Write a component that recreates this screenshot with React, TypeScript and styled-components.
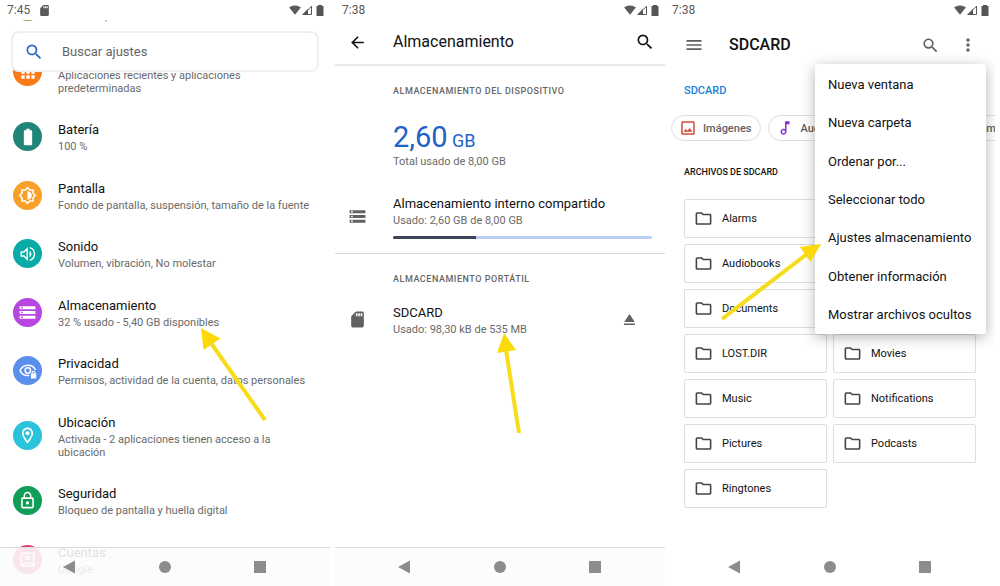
import React from "react";
import styled, { createGlobalStyle } from "styled-components";
import {
  MdApps,
  MdArrowBack,
  MdBatteryFull,
  MdDevicesOther,
  MdEject,
  MdLockOutline,
  MdMenu,
  MdMoreVert,
  MdOutlineAccountBox,
  MdOutlineAudiotrack,
  MdOutlineBrightness6,
  MdOutlineDescription,
  MdOutlineFolder,
  MdOutlineImage,
  MdOutlineLocationOn,
  MdOutlineMovie,
  MdOutlineVolumeUp,
  MdSdCard,
  MdSearch,
  MdSignalWifi4Bar,
  MdStorage,
} from "react-icons/md";

const GlobalStyle = createGlobalStyle`
  * { box-sizing: border-box; }
  body {
    margin: 0;
    background: #fff;
    color: #111;
    font-family: Roboto, "Liberation Sans", sans-serif;
  }
  button, input { font: inherit; color: inherit; }
  button { padding: 0; border: 0; background: none; cursor: pointer; }
  h1, h2, p, ul { margin: 0; padding: 0; }
  ul { list-style: none; }
  svg { display: block; flex: none; }
`;

const Page = styled.div`
  display: flex;
  min-height: 100vh;
  padding-right: 5px;
`;

const Screen = styled.section<{ $gapBefore?: boolean }>`
  position: relative;
  display: flex;
  flex-direction: column;
  flex: 1 1 0;
  min-width: 0;
  margin-left: ${(p) => (p.$gapBefore ? "5px" : "0")};
  overflow: hidden;
  background: #fff;
`;

/* Status bar */

const StatusRow = styled.div`
  position: relative;
  z-index: 2;
  display: flex;
  align-items: center;
  height: 20px;
  padding: 0 5px 0 7px;
  background: #fff;
  color: #5a5a5a;
  font-size: 12px;
  line-height: 20px;
`;

const StatusSide = styled.div<{ $end?: boolean }>`
  display: flex;
  align-items: center;
  gap: ${(p) => (p.$end ? "1px" : "8px")};
  margin-left: ${(p) => (p.$end ? "auto" : "0")};
`;

function SignalIcon() {
  return (
    <svg width="10" height="10" viewBox="0 0 10 10" aria-hidden="true">
      <path d="M0 10 L6 4 V10Z" fill="#555" />
      <path d="M1.2 9.5 L9.5 1.2 V9.5Z" fill="none" stroke="#555" />
    </svg>
  );
}

function BatteryGlyph() {
  return (
    <svg width="12" height="12" viewBox="0 0 12 12" aria-hidden="true">
      <path d="M5 1h4v1h1.5v10h-7V2H5z" fill="#555" />
    </svg>
  );
}

function StatusBar({ time, card }: { time: string; card?: boolean }) {
  return (
    <StatusRow>
      <StatusSide>
        <span>{time}</span>
        {card && <MdSdCard size={13} />}
      </StatusSide>
      <StatusSide $end>
        <MdSignalWifi4Bar size={12} />
        <SignalIcon />
        <BatteryGlyph />
      </StatusSide>
    </StatusRow>
  );
}

/* Navigation bar */

const NavRow = styled.nav<{ $variant: "overlay" | "tinted" | "plain" }>`
  display: flex;
  justify-content: space-between;
  align-items: center;
  height: 39px;
  margin-top: auto;
  padding: 0 64px 0 63px;
  border-top: 1px solid ${(p) => (p.$variant === "plain" ? "transparent" : "#dcdcdc")};
  background: ${(p) =>
    p.$variant === "overlay"
      ? "rgba(252, 252, 252, 0.88)"
      : p.$variant === "tinted"
      ? "#fcfcfc"
      : "#fff"};
  ${(p) =>
    p.$variant === "overlay" &&
    "position: absolute; left: 0; right: 0; bottom: 0; z-index: 2;"}
`;

const NavButton = styled.button`
  color: #8c8c8c;
`;

function NavBar({ variant }: { variant: "overlay" | "tinted" | "plain" }) {
  return (
    <NavRow $variant={variant} aria-label="Navegación">
      <NavButton aria-label="Atrás">
        <svg width="12" height="14" viewBox="0 0 12 14">
          <path d="M12 .5V13.5L0 7z" fill="currentColor" />
        </svg>
      </NavButton>
      <NavButton aria-label="Inicio">
        <svg width="12" height="12" viewBox="0 0 12 12">
          <circle cx="6" cy="6" r="6" fill="currentColor" />
        </svg>
      </NavButton>
      <NavButton aria-label="Recientes">
        <svg width="12" height="12" viewBox="0 0 12 12">
          <path d="M0 0h12v12H0z" fill="currentColor" />
        </svg>
      </NavButton>
    </NavRow>
  );
}

/* Shared text */

const ItemTitle = styled.p`
  font-size: 13px;
  line-height: 20px;
`;

const ItemDetail = styled.p`
  color: #6a6a6a;
  font-size: 11px;
  line-height: 13px;
`;

const Arrow = styled.svg`
  position: absolute;
  z-index: 4;
  pointer-events: none;
`;

/* Settings screen */

const SearchBox = styled.label`
  position: absolute;
  top: 31px;
  left: 11px;
  right: 11px;
  z-index: 2;
  display: flex;
  align-items: center;
  gap: 18px;
  height: 41px;
  padding: 0 11px;
  border: 2px solid #efefef;
  border-radius: 8px;
  background: #fff;
  color: #2663c4;
`;

const SearchInput = styled.input`
  flex: 1;
  min-width: 0;
  border: 0;
  padding: 0;
  outline: 0;
  background: transparent;
  font-size: 13px;
  &::placeholder {
    color: #666;
    opacity: 1;
  }
`;

const SettingsList = styled.ul`
  display: flex;
  flex: 1;
  flex-direction: column;
  justify-content: space-between;
  gap: 24px;
  margin-top: -30px;
  padding-bottom: 10px;
`;

const SettingsRow = styled.li`
  display: flex;
  align-items: center;
  gap: 16px;
  padding: 0 13px;
`;

const Disc = styled.span<{ $color: string }>`
  display: flex;
  flex: none;
  align-items: center;
  justify-content: center;
  width: 29px;
  height: 29px;
  border-radius: 50%;
  background: ${(p) => p.$color};
  color: #fff;
`;

function PrivacyIcon() {
  return (
    <svg width="18" height="18" viewBox="0 0 18 18" fill="none" aria-hidden="true">
      <path
        d="M10.5 13.4 C5.5 14.2 2.2 11.5 1 8.5 C4.2 1.8 13.3 1.6 16.6 8"
        stroke="#fff"
        strokeWidth="1.5"
      />
      <circle cx="8.8" cy="8.5" r="2.7" stroke="#fff" strokeWidth="1.5" />
      <path d="M12 11.5h5.2v5H12z" fill="#fff" />
      <path d="M13.2 12v-1.4a1.4 1.4 0 0 1 2.8 0V12" stroke="#fff" strokeWidth="1.1" />
    </svg>
  );
}

/* Speaker with an outlined cone, a half disc and one outer wave */
function SoundIcon() {
  return (
    <svg width="18" height="18" viewBox="0 0 18 18" fill="none" stroke="#fff" strokeWidth="1.4" aria-hidden="true">
      <path d="M2.2 7v4H5l3.200 3.200V3.800L5 7z" />
      <path d="M10.500 5.800v6.400a3.600 3.600 0 0 0 0-6.400z" fill="#fff" stroke="none" />
      <path d="M10.800 2.700a6.600 6.600 0 0 1 0 12.600" />
    </svg>
  );
}

const settings = [
  { title: "Dispositivos conectados", lines: ["Bluetooth, vinculación"], color: "#7cb342", icon: <MdDevicesOther size={18} /> },
  { title: "Aplicaciones y notificaciones", lines: ["Aplicaciones recientes y aplicaciones", "predeterminadas"], color: "#fa7b17", icon: <MdApps size={20} /> },
  { title: "Batería", lines: ["100 %"], color: "#1f8577", icon: <MdBatteryFull size={20} /> },
  { title: "Pantalla", lines: ["Fondo de pantalla, suspensión, tamaño de la fuente"], color: "#f9a02a", icon: <MdOutlineBrightness6 size={19} /> },
  { title: "Sonido", lines: ["Volumen, vibración, No molestar"], color: "#0aaaa6", icon: <SoundIcon /> },
  { title: "Almacenamiento", lines: ["32 % usado - 5,40 GB disponibles"], color: "#b846e0", icon: <MdStorage size={19} /> },
  { title: "Privacidad", lines: ["Permisos, actividad de la cuenta, datos personales"], color: "#5a8fec", icon: <PrivacyIcon /> },
  { title: "Ubicación", lines: ["Activada - 2 aplicaciones tienen acceso a la", "ubicación"], color: "#2bc2dc", icon: <MdOutlineLocationOn size={19} /> },
  { title: "Seguridad", lines: ["Bloqueo de pantalla y huella digital"], color: "#0f9d58", icon: <MdLockOutline size={19} /> },
  { title: "Cuentas", lines: ["Google"], color: "#e0417c", icon: <MdOutlineAccountBox size={19} /> },
];

function SettingsScreen() {
  return (
    <Screen>
      <StatusBar time="7:45" card />
      <SearchBox>
        <MdSearch size={20} />
        <SearchInput placeholder="Buscar ajustes" aria-label="Buscar ajustes" />
      </SearchBox>
      <SettingsList>
        {settings.map((s) => (
          <SettingsRow key={s.title}>
            <Disc $color={s.color}>{s.icon}</Disc>
            <div>
              <ItemTitle>{s.title}</ItemTitle>
              {s.lines.map((l) => (
                <ItemDetail key={l}>{l}</ItemDetail>
              ))}
            </div>
          </SettingsRow>
        ))}
      </SettingsList>
      <NavBar variant="overlay" />
      <Arrow width="330" height="440" viewBox="0 0 330 440" aria-hidden="true">
        <path d="M265 420 L211 343" stroke="#f7dc1c" strokeWidth="4" />
        <path d="M201 328 L203.500 350 L220.500 338.500Z" fill="#fbd90b" />
      </Arrow>
    </Screen>
  );
}

/* Storage screen */

const StorageHeader = styled.header`
  display: flex;
  align-items: center;
  height: 46px;
  padding: 0 10px 0 13px;
  border-bottom: 2px solid #e8e8e8;
`;

const ScreenTitle = styled.h1<{ $strong?: boolean }>`
  flex: 1;
  font-size: 16px;
  font-weight: ${(p) => (p.$strong ? 500 : 400)};
  line-height: 20px;
`;

const BackButton = styled.button`
  width: 45px;
`;

const StorageSection = styled.section<{ $divided?: boolean }>`
  padding: 0 13px 14px 58px;
  border-bottom: ${(p) => (p.$divided ? "1px solid #d8d8d8" : "0")};
`;

const SectionLabel = styled.h2`
  padding: 19px 0 18px;
  color: #666;
  font-size: 9px;
  font-weight: 500;
  letter-spacing: 0.06em;
  line-height: 12px;
`;

const UsedTotal = styled.p`
  padding-top: 4px;
  color: #1f62c8;
  font-size: 29px;
  line-height: 36px;
`;

const Unit = styled.span`
  font-size: 18px;
  line-height: 1;
`;

const VolumeRow = styled.div<{ $spaced?: boolean }>`
  display: flex;
  align-items: center;
  margin: ${(p) => (p.$spaced ? "26px" : "0")} 0 0 -45px;
`;

const VolumeIcon = styled.span`
  width: 45px;
  color: #616161;
`;

const VolumeText = styled.div`
  flex: 1;
`;

const EjectButton = styled.button`
  margin-right: 13px;
  color: #616161;
`;

const Meter = styled.div`
  height: 3px;
  margin-top: 9px;
  border-radius: 2px;
  background: #b9d0f2;
  overflow: hidden;
`;

const MeterFill = styled.div`
  height: 100%;
  background: #3d4656;
`;

function StorageScreen() {
  const used = 32;
  return (
    <Screen $gapBefore>
      <StatusBar time="7:38" />
      <StorageHeader>
        <BackButton aria-label="Volver">
          <MdArrowBack size={19} />
        </BackButton>
        <ScreenTitle>Almacenamiento</ScreenTitle>
        <button aria-label="Buscar">
          <MdSearch size={20} />
        </button>
      </StorageHeader>
      <StorageSection $divided>
        <SectionLabel>ALMACENAMIENTO DEL DISPOSITIVO</SectionLabel>
        <UsedTotal>
          2,60<Unit> GB</Unit>
        </UsedTotal>
        <ItemDetail>Total usado de 8,00 GB</ItemDetail>
        <VolumeRow $spaced>
          <VolumeIcon>
            <MdStorage size={19} />
          </VolumeIcon>
          <VolumeText>
            <ItemTitle>Almacenamiento interno compartido</ItemTitle>
            <ItemDetail>Usado: 2,60 GB de 8,00 GB</ItemDetail>
            <Meter role="progressbar" aria-label="Espacio usado" aria-valuenow={used}>
              <MeterFill style={{ width: `${used}%` }} />
            </Meter>
          </VolumeText>
        </VolumeRow>
      </StorageSection>
      <StorageSection>
        <SectionLabel>ALMACENAMIENTO PORTÁTIL</SectionLabel>
        <VolumeRow>
          <VolumeIcon>
            <MdSdCard size={19} />
          </VolumeIcon>
          <VolumeText>
            <ItemTitle>SDCARD</ItemTitle>
            <ItemDetail>Usado: 98,30 kB de 535 MB</ItemDetail>
          </VolumeText>
          <EjectButton aria-label="Expulsar">
            <MdEject size={19} />
          </EjectButton>
        </VolumeRow>
      </StorageSection>
      <NavBar variant="tinted" />
      <Arrow width="330" height="440" viewBox="0 0 330 440" aria-hidden="true">
        <path d="M184 433 L171 350" stroke="#f7dc1c" strokeWidth="4" />
        <path d="M169 333 L162 353 L181 350Z" fill="#fbd90b" />
      </Arrow>
    </Screen>
  );
}

/* Files screen */

const FilesHeader = styled.header`
  display: flex;
  align-items: center;
  height: 50px;
  padding: 0 17px 0 19px;
  color: #5f5f5f;
`;

const MenuButton = styled.button`
  width: 45px;
`;

const FilesTitle = styled(ScreenTitle)`
  color: #111;
`;

const HeaderActions = styled.div`
  display: flex;
  gap: 18px;
`;

const Breadcrumb = styled.a`
  align-self: flex-start;
  margin: 12px 19px 9px;
  color: #1a7fd8;
  font-size: 11px;
  font-weight: 500;
  line-height: 18px;
  text-decoration: none;
`;

const Chips = styled.div`
  display: flex;
  gap: 7px;
  margin-top: 6px;
  padding-left: 6px;
  overflow: hidden;
`;

const Chip = styled.button<{ $color: string }>`
  display: flex;
  flex: none;
  align-items: center;
  gap: 6px;
  height: 26px;
  padding: 0 9px 0 7px;
  border: 1px solid #dedede;
  border-radius: 13px;
  color: #616161;
  font-size: 11px;
  font-weight: 500;
  svg { color: ${(p) => p.$color}; }
`;

const FilesLabel = styled.h2`
  margin: 25px 19px 21px;
  font-size: 9px;
  font-weight: 500;
  line-height: 12px;
`;

const FolderGrid = styled.div`
  display: grid;
  grid-template-columns: 1fr 1fr;
  gap: 6px;
  padding: 0 19px 24px;
`;

const Folder = styled.button`
  display: flex;
  align-items: center;
  gap: 9px;
  height: 39px;
  padding: 0 9px;
  border: 1px solid #dedede;
  border-radius: 2px;
  font-size: 11px;
  svg { color: #444; }
`;

const Menu = styled.div`
  position: absolute;
  top: 64px;
  right: 9px;
  z-index: 3;
  display: flex;
  flex-direction: column;
  height: 270px;
  width: 171px;
  padding-top: 1px;
  border-radius: 2px;
  background: #fff;
  box-shadow: 0 3px 14px rgba(0, 0, 0, 0.3);
`;

const MenuItem = styled.button`
  flex: 1;
  padding: 0 13px;
  font-size: 13px;
  text-align: left;
  white-space: nowrap;
`;

const menuItems = [
  "Nueva ventana",
  "Nueva carpeta",
  "Ordenar por...",
  "Seleccionar todo",
  "Ajustes almacenamiento",
  "Obtener información",
  "Mostrar archivos ocultos",
];

const folders = [
  "Alarms", "Android", "Audiobooks", "DCIM", "Documents", "Download", "LOST.DIR",
  "Movies", "Music", "Notifications", "Pictures", "Podcasts", "Ringtones",
];

function FilesScreen() {
  return (
    <Screen>
      <StatusBar time="7:38" />
      <FilesHeader>
        <MenuButton aria-label="Abrir menú">
          <MdMenu size={20} />
        </MenuButton>
        <FilesTitle $strong>SDCARD</FilesTitle>
        <HeaderActions>
          <button aria-label="Buscar">
            <MdSearch size={19} />
          </button>
          <button aria-label="Más opciones">
            <MdMoreVert size={20} />
          </button>
        </HeaderActions>
      </FilesHeader>
      <Breadcrumb href="#sdcard">SDCARD</Breadcrumb>
      <Chips>
        <Chip $color="#d04a3e"><MdOutlineImage size={18} />Imágenes</Chip>
        <Chip $color="#8a2fd0"><MdOutlineAudiotrack size={18} />Audio</Chip>
        <Chip $color="#d04a3e"><MdOutlineMovie size={18} />Vídeos</Chip>
        <Chip $color="#1a73e8"><MdOutlineDescription size={18} />Documentos</Chip>
      </Chips>
      <FilesLabel>ARCHIVOS DE SDCARD</FilesLabel>
      <FolderGrid>
        {folders.map((name) => (
          <Folder key={name}>
            <MdOutlineFolder size={19} />
            {name}
          </Folder>
        ))}
      </FolderGrid>
      <NavBar variant="plain" />
      <Menu role="menu">
        {menuItems.map((label) => (
          <MenuItem key={label} role="menuitem">
            {label}
          </MenuItem>
        ))}
      </Menu>
      <Arrow width="330" height="440" viewBox="0 0 330 440" aria-hidden="true">
        <path d="M57 319 L142 254" stroke="#f7dc1c" strokeWidth="4" />
        <path d="M156 244 L135 247 L145.500 262Z" fill="#fbd90b" />
      </Arrow>
    </Screen>
  );
}

export default function App() {
  return (
    <>
      <GlobalStyle />
      <Page>
        <SettingsScreen />
        <StorageScreen />
        <FilesScreen />
      </Page>
    </>
  );
}
